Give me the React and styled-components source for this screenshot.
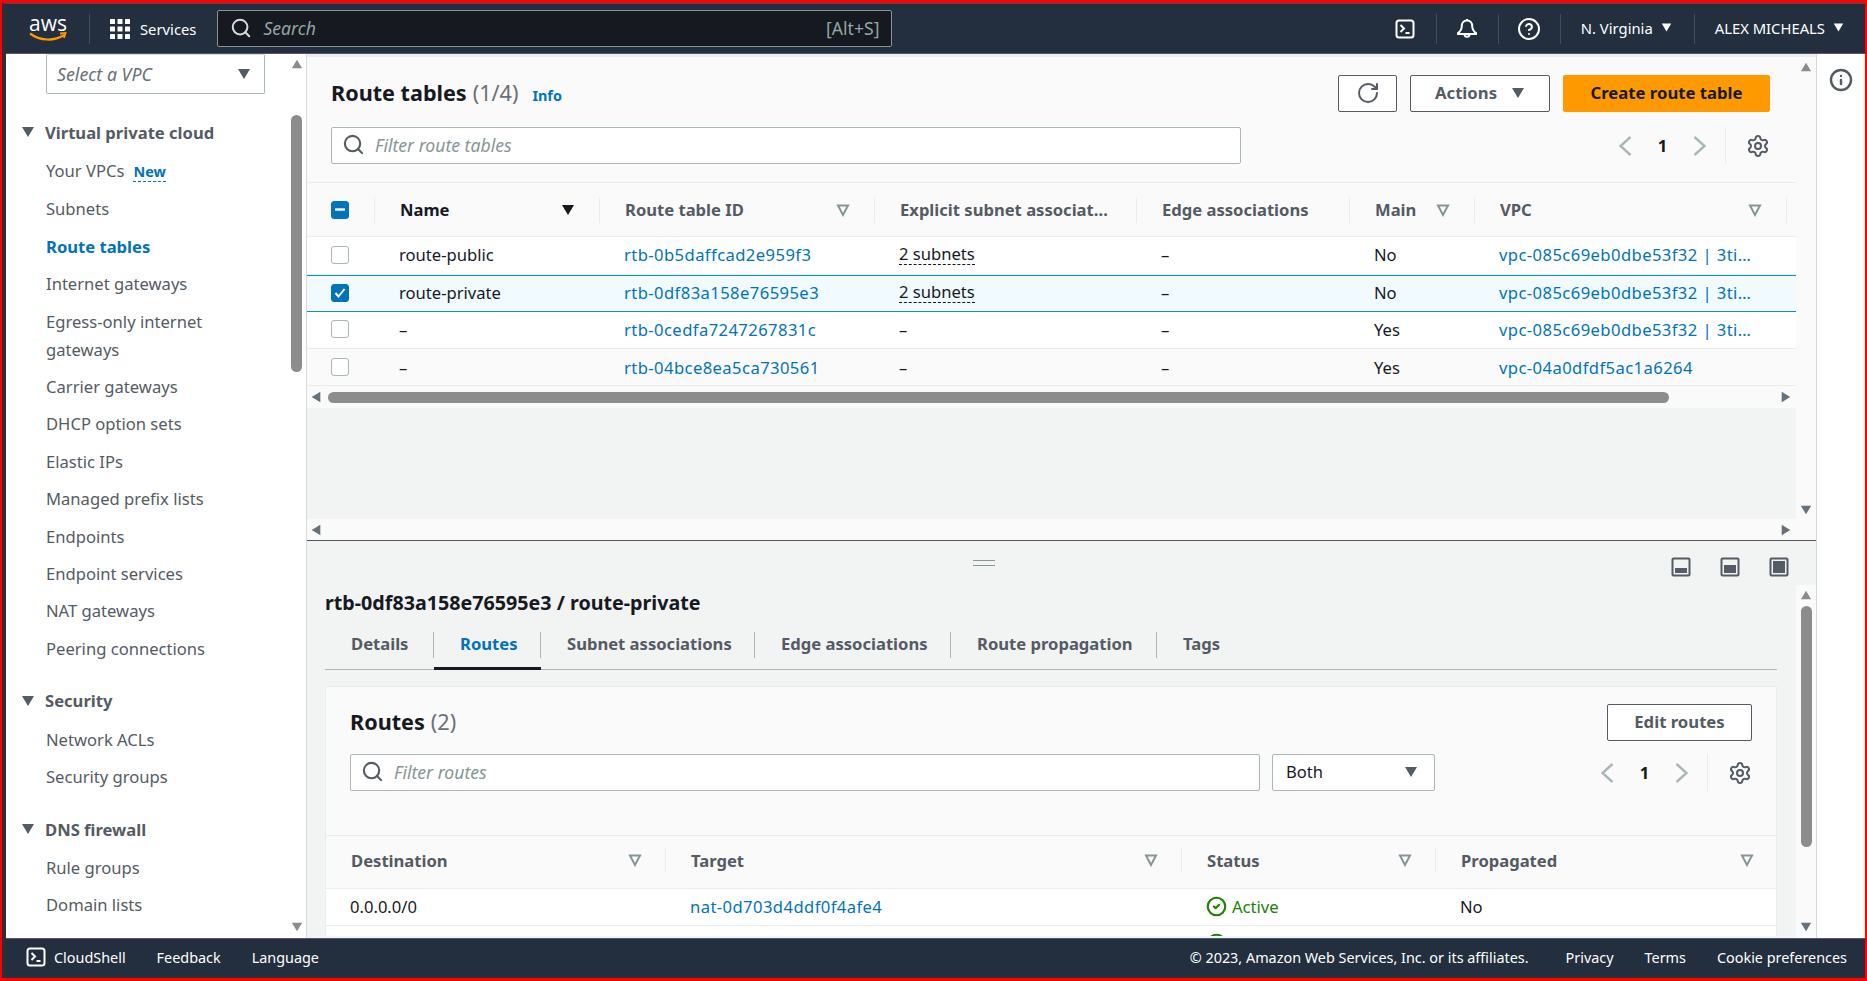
import React from "react";
import styled, { createGlobalStyle } from "styled-components";
import { CircleCheck, CircleHelp, Info, RotateCw, Search, Settings } from "lucide-react";

const GlobalStyle = createGlobalStyle`
  html, body { margin: 0; padding: 0; background: #ff0000; }
  body { font-family: "Noto Sans", "Open Sans", sans-serif; font-size: 16.6px; color: #16191f; overflow: hidden; }
  * { box-sizing: border-box; }
`;

const Frame = styled.div`
  width: 1867px;
  height: 981px;
  background: #ff0000;
  padding: 3px 2px;
`;

const Window = styled.div`
  height: 100%;
  display: flex;
  flex-direction: column;
  border-left: 4px solid #2b3038;
  border-top: 1px solid #414d5c;
  border-bottom: 3px solid #2b3038;
`;

const TopNav = styled.header`
  height: 50px;
  flex: none;
  background: #232f3e;
  border-bottom: 1px solid #545b64;
  display: flex;
  align-items: center;
  color: #fff;
  padding-left: 22px;
  font-size: 14.8px;
`;

const Logo = styled.div`
  width: 40px;
  height: 32px;
  display: flex;
  flex-direction: column;
  align-items: center;
  margin-right: 21px;
  line-height: 20px;
  font-size: 21px;
  font-family: "Open Sans", sans-serif;
  svg { margin-top: -1px; }
`;

const NavDivider = styled.span`
  width: 1px;
  height: 30px;
  background: #414d5c;
  flex: none;
`;

const Services = styled.div`
  display: flex;
  align-items: center;
  gap: 10px;
  margin: 0 21px 0 20px;
`;

const SearchBox = styled.div`
  width: 675px;
  height: 37px;
  background: #16191f;
  border: 1px solid #879596;
  border-radius: 2px;
  display: flex;
  align-items: center;
  padding: 0 12px 2px;
  color: #95a5a6;
  font-size: 17.6px;
  svg { color: #d5dbdb; margin-right: 11px; }
  em { flex: 1; }
`;

const NavRight = styled.div`
  margin-left: auto;
  display: flex;
  align-items: center;
  height: 30px;
`;

const NavIcon = styled.div`
  width: 62px;
  height: 30px;
  display: flex;
  align-items: center;
  justify-content: center;
  border-right: 1px solid #414d5c;
`;

const NavMenu = styled.div`
  height: 30px;
  display: flex;
  align-items: center;
  gap: 8px;
  padding: 0 ${(p) => p.$pr}px 2px 20px;
  border-right: ${(p) => (p.$last ? "none" : "1px solid #414d5c")};
`;

const Body = styled.div`
  flex: 1;
  display: flex;
  min-height: 0;
`;

const Sidebar = styled.nav`
  width: 301px;
  flex: none;
  background: #fff;
  display: flex;
  border-right: 1px solid #d5dbdb;
`;

const SideContent = styled.div`
  flex: 1;
  overflow: hidden;
  padding-left: 40px;
  color: #545b64;
`;

const VpcSelect = styled.div`
  width: 219px;
  height: 40px;
  border: 1px solid #aab7b8;
  border-top-color: #d5dbdb;
  border-radius: 2px;
  display: flex;
  align-items: center;
  justify-content: space-between;
  padding: 0 13px 0 10px;
  font-style: italic;
  font-size: 17.8px;
  color: #687078;
  margin-bottom: 24px;
`;

const SideHeading = styled.div`
  display: flex;
  align-items: center;
  height: 28px;
  font-weight: 700;
  margin: ${(p) => (p.$first ? 0 : 24)}px 0 11px -25px;
  gap: 10px;
`;

const SideItem = styled.div`
  line-height: 28px;
  margin-bottom: 9.4px;
  width: 200px;
  font-weight: ${(p) => (p.$active ? 700 : 400)};
  color: ${(p) => (p.$active ? "#0073bb" : "#545b64")};
`;

const NewBadge = styled.span`
  color: #0073bb;
  font-weight: 700;
  font-size: 14.4px;
  margin-left: 9px;
  border-bottom: 1px dashed #0073bb;
`;

const VTrack = styled.div`
  width: ${(p) => p.$w}px;
  flex: none;
  display: flex;
  flex-direction: column;
  align-items: center;
  background: ${(p) => p.$bg};
  padding: 4px 0 ${(p) => p.$pb ?? 5}px;
`;

const VThumb = styled.div`
  width: 11px;
  height: ${(p) => p.$h}px;
  margin-top: ${(p) => p.$top}px;
  background: #8c8c8c;
  border-radius: 6px;
`;

const TrackEnd = styled.div`
  margin-top: auto;
  display: flex;
`;

const Main = styled.main`
  width: 1509px;
  flex: none;
  display: flex;
  flex-direction: column;
  background: #f2f3f3;
`;

const Upper = styled.section`
  height: 487px;
  flex: none;
  display: flex;
  border-top: 3px solid #eaeded;
  border-bottom: 1px solid #545b64;
`;

const UpperBody = styled.div`
  flex: 1;
  min-width: 0;
  display: flex;
  flex-direction: column;
`;

const PanelHead = styled.div`
  background: #fafafa;
  height: 126px;
  flex: none;
  padding: 18px 26px 0 24px;
  border-bottom: 1px solid #eaeded;
`;

const HeadRow = styled.div`
  display: flex;
  align-items: center;
  justify-content: space-between;
`;

const Title = styled.h1`
  margin: -2px 0 0;
  font-size: 21.6px;
  font-weight: 700;
  display: flex;
  align-items: baseline;
  gap: 6px;
  span { font-weight: 400; color: #687078; }
`;

const InfoLink = styled.a`
  color: #0073bb;
  font-size: 14.4px;
  font-weight: 700;
  margin-left: 8px;
`;

const Actions = styled.div`
  display: flex;
  gap: 13px;
`;

const Button = styled.button`
  height: 37px;
  width: ${(p) => p.$w}px;
  font: inherit;
  font-weight: 700;
  font-size: 16.7px;
  border-radius: 2px;
  border: 1px solid ${(p) => (p.$primary ? "#ff9900" : "#545b64")};
  background: ${(p) => (p.$primary ? "#ff9900" : "#fff")};
  color: ${(p) => (p.$primary ? "#16191f" : "#545b64")};
  display: flex;
  align-items: center;
  justify-content: center;
  gap: 14px;
  padding: 0 0 2px;
`;

const FilterRow = styled.div`
  display: flex;
  align-items: center;
  margin-top: ${(p) => p.$top}px;
`;

const Filter = styled.div`
  height: 37px;
  width: ${(p) => p.$w}px;
  flex: none;
  background: #fff;
  border: 1px solid #aab7b8;
  border-radius: 2px;
  display: flex;
  align-items: center;
  gap: 10px;
  padding: 0 0 2px 10px;
  font-style: italic;
  font-size: 17.6px;
  color: #879596;
  svg { color: #545b64; }
`;

const BothSelect = styled.div`
  height: 37px;
  width: 163px;
  margin-left: 12px;
  flex: none;
  background: #fff;
  border: 1px solid #aab7b8;
  border-radius: 2px;
  display: flex;
  align-items: center;
  justify-content: space-between;
  padding: 0 16px 2px 13px;
`;

const Pager = styled.div`
  margin-left: auto;
  display: flex;
  align-items: center;
  height: 37px;
`;

const PageNum = styled.b`
  width: 61px;
  text-align: center;
  color: #16191f;
  font-size: 16.6px;
`;

const GearCell = styled.div`
  margin-left: 19px;
  height: 37px;
  padding-left: 20px;
  border-left: 1px solid #eaeded;
  color: #545b64;
  display: flex;
  align-items: center;
`;

const HeaderRow = styled.div`
  display: grid;
  grid-template-columns: ${(p) => p.$cols};
  height: ${(p) => p.$h}px;
  padding-bottom: ${(p) => p.$pb ?? 0}px;
  flex: none;
  align-items: center;
  background: #fafafa;
  border-bottom: 1px solid #eaeded;
`;

const HeadCell = styled.div`
  height: 26px;
  display: flex;
  align-items: center;
  justify-content: space-between;
  padding: 0 ${(p) => p.$pr ?? 24}px 0 ${(p) => p.$pl ?? 25}px;
  border-right: ${(p) => (p.$end ? "none" : "1px solid #eaeded")};
  font-weight: 700;
  color: ${(p) => (p.$sorted ? "#16191f" : "#545b64")};
  white-space: nowrap;
`;

const DataRow = styled.div`
  display: grid;
  grid-template-columns: ${(p) => p.$cols};
  height: ${(p) => p.$h || 37}px;
  padding-bottom: ${(p) => (p.$soft ? 0 : 2)}px;
  flex: none;
  align-items: center;
  background: ${(p) => (p.$selected ? "#f1faff" : p.$soft ? "#fafafa" : "#fff")};
  border-bottom: 1px solid ${(p) => (p.$selected ? "#0f8fc4" : "#eaeded")};
  border-top: ${(p) => (p.$selected ? "1px solid #0f8fc4" : "none")};
`;

const Cell = styled.div`
  padding-left: 24px;
  white-space: nowrap;
  display: flex;
  align-items: center;
`;

const Link = styled.a`
  color: #0073bb;
  letter-spacing: 0.42px;
`;

const Dotted = styled.span`
  border-bottom: 1px dashed #16191f;
  line-height: 20px;
`;

const Active = styled.span`
  color: #1d8102;
  display: flex;
  align-items: center;
  gap: 5px;
`;

const Box = styled.span`
  width: 18px;
  height: 18px;
  display: block;
  border-radius: 3px;
  border: 1px solid ${(p) => (p.$on ? "#0073bb" : "#aab7b8")};
  background: ${(p) => (p.$on ? "#0073bb" : "#fff")};
  svg { display: block; }
`;

const HScroll = styled.div`
  height: ${(p) => p.$h}px;
  flex: none;
  background: #fafafa;
  display: flex;
  align-items: center;
  justify-content: space-between;
  padding: 0 4px 0 3px;
`;

const HThumb = styled.div`
  width: 1341px;
  height: 11px;
  background: #8c8c8c;
  border-radius: 6px;
  margin: 0 auto 0 6px;
`;

const EmptyArea = styled.div`
  flex: 1;
  background: #f2f3f3;
`;

const Lower = styled.section`
  flex: 1;
  min-height: 0;
  display: flex;
  flex-direction: column;
`;

const HandleRow = styled.div`
  height: 44px;
  flex: none;
  display: flex;
  align-items: center;
  padding-right: 27px;
`;

const Handle = styled.div`
  width: 22px;
  height: 6px;
  margin-left: 666px;
  border-top: 1px solid #879596;
  border-bottom: 1px solid #879596;
`;

const SplitIcons = styled.div`
  margin-left: auto;
  padding-top: 8px;
  display: flex;
  gap: 29px;
  color: #545b64;
  svg { display: block; }
`;

const LowerBody = styled.div`
  flex: 1;
  min-height: 0;
  display: flex;
`;

const LowerContent = styled.div`
  flex: 1;
  min-width: 0;
  padding: 0 19px 2px 18px;
  display: flex;
  flex-direction: column;
`;

const DetailTitle = styled.h2`
  margin: 5px 0 0;
  font-size: 19.7px;
  line-height: 26px;
  font-weight: 700;
`;

const Tabs = styled.div`
  display: flex;
  margin-top: 16px;
  height: 38px;
  flex: none;
  border-bottom: 1px solid #aab7b8;
`;

const Tab = styled.div`
  width: ${(p) => p.$w}px;
  flex: none;
  height: 37px;
  padding: 0 0 15px 26px;
  display: flex;
  align-items: center;
  white-space: nowrap;
  font-weight: 700;
  color: ${(p) => (p.$active ? "#0073bb" : "#545b64")};
  position: relative;
  &::after {
    content: "";
    position: absolute;
    right: 0;
    top: 0;
    height: 26px;
    border-right: ${(p) => (p.$end ? "none" : "1px solid #aab7b8")};
  }
  &::before {
    content: "";
    position: absolute;
    left: 0;
    right: 0;
    bottom: -1px;
    height: 3px;
    background: ${(p) => (p.$active ? "#16191f" : "transparent")};
  }
`;

const RoutesPanel = styled.div`
  margin-top: 16px;
  flex: 1;
  min-height: 0;
  overflow: hidden;
  background: #fafafa;
  border-left: 1px solid #eaeded;
  border-right: 1px solid #eaeded;
  border-top: 1px solid #eaeded;
  display: flex;
  flex-direction: column;
`;

const RoutesHead = styled.div`
  height: 149px;
  flex: none;
  padding: 17px 24px 0 24px;
  border-bottom: 1px solid #eaeded;
`;

const RoutesTitleRow = styled.div`
  display: flex;
  align-items: center;
  justify-content: space-between;
`;

const Tools = styled.aside`
  flex: 1;
  background: #fff;
  border-left: 1px solid #d5dbdb;
  display: flex;
  justify-content: center;
  padding-top: 14px;
  color: #545b64;
  svg { height: 24px; }
`;

const Footer = styled.footer`
  height: 37px;
  flex: none;
  background: #232f3e;
  border-top: 1px solid #545b64;
  color: #fff;
  display: flex;
  align-items: center;
  font-size: 14.4px;
  padding-left: 20px;
  padding-right: 18px;
`;

const FootLink = styled.span`
  display: flex;
  align-items: center;
  gap: 8px;
  margin-right: 31px;
`;

const FootRight = styled.div`
  margin-left: auto;
  display: flex;
  align-items: center;
  gap: 31px;
  span:first-child { margin-right: 6px; }
`;

const Caret = ({ color = "#545b64", size = 14, up, left, right }) => {
  const points = up ? "7,2 13,12 1,12" : left ? "12,1 12,13 2,7" : right ? "2,1 2,13 12,7" : "1,2 13,2 7,12";
  return (
    <svg width={size} height={size} viewBox="0 0 14 14" style={{ flex: "none" }}>
      <polygon points={points} fill={color} />
    </svg>
  );
};

const FilterCaret = () => (
  <svg width="14" height="14" viewBox="0 0 14 14" style={{ flex: "none" }}>
    <polygon points="2,2.5 12,2.5 7,12" fill="none" stroke="#879596" strokeWidth="2" />
  </svg>
);

const ShellIcon = () => (
  <svg width="20" height="20" viewBox="0 0 20 20" fill="none" stroke="#fff" strokeWidth="2">
    <rect x="1.5" y="1.5" width="17" height="17" rx="2.5" />
    <path d="M5.5 6l3.5 3.5-3.5 3.5M10.5 14h4" />
  </svg>
);

const BellIcon = () => (
  <svg width="22" height="22" viewBox="0 0 22 22" fill="none" stroke="#fff" strokeWidth="2">
    <path d="M11 2.5c-3.4 0-5.2 2.6-5.2 5.6 0 3.6-1.3 5.2-3.8 7v1h18v-1c-2.5-1.8-3.8-3.4-3.8-7 0-3-1.8-5.6-5.2-5.6z" />
    <path d="M8.5 16.2a2.5 2.5 0 0 0 5 0" />
    <path d="M11 1v2" />
  </svg>
);

const Chevron = ({ right }) => (
  <svg width="13" height="20" viewBox="0 0 13 20" fill="none" stroke="#aab7b8" strokeWidth="2.4" style={{ flex: "none" }}>
    <path d={right ? "M1.5 1l10 9-10 9" : "M11.5 1l-10 9 10 9"} />
  </svg>
);

const SplitIcon = ({ y, h }) => (
  <svg width="20" height="20" viewBox="0 0 20 20">
    <rect x="1.5" y="1.5" width="17" height="17" rx="1" fill="none" stroke="currentColor" strokeWidth="2" />
    <rect x="4" y={y} width="12" height={h} fill="currentColor" />
  </svg>
);

const tableCols = "68px 225px 275px 262px 213px 125px 312px 9px";
const routeCols = "340px 516px 254px 338px";

const tableRows = [
  { name: "route-public", id: "rtb-0b5daffcad2e959f3", sub: "2 subnets", main: "No", vpc: "vpc-085c69eb0dbe53f32 | 3ti…", h: 38 },
  { name: "route-private", id: "rtb-0df83a158e76595e3", sub: "2 subnets", main: "No", vpc: "vpc-085c69eb0dbe53f32 | 3ti…", selected: true },
  { name: "–", id: "rtb-0cedfa7247267831c", sub: "–", main: "Yes", vpc: "vpc-085c69eb0dbe53f32 | 3ti…" },
  { name: "–", id: "rtb-04bce8ea5ca730561", sub: "–", main: "Yes", vpc: "vpc-04a0dfdf5ac1a6264", soft: true },
];

const sideGroups = [
  {
    title: "Virtual private cloud",
    items: ["Your VPCs", "Subnets", "Route tables", "Internet gateways", "Egress-only internet gateways", "Carrier gateways", "DHCP option sets", "Elastic IPs", "Managed prefix lists", "Endpoints", "Endpoint services", "NAT gateways", "Peering connections"],
  },
  { title: "Security", items: ["Network ACLs", "Security groups"] },
  { title: "DNS firewall", items: ["Rule groups", "Domain lists"] },
];

const tabs = [
  ["Details", 109],
  ["Routes", 107, true],
  ["Subnet associations", 214],
  ["Edge associations", 196],
  ["Route propagation", 206],
  ["Tags", 120],
];

function PagerBlock() {
  return (
    <Pager>
      <Chevron />
      <PageNum>1</PageNum>
      <Chevron right />
      <GearCell><Settings size={24} /></GearCell>
    </Pager>
  );
}

function App() {
  return (
    <Frame>
      <GlobalStyle />
      <Window>
        <TopNav>
          <Logo>
            aws
            <svg width="38" height="10" viewBox="0 0 38 10" fill="none">
              <path d="M1 1.5c10 7.5 24 8 34 1.5" stroke="#ff9900" strokeWidth="2.2" />
              <path d="M31 1.5l5.5-.5-1.5 5" stroke="#ff9900" strokeWidth="1.8" />
            </svg>
          </Logo>
          <NavDivider />
          <Services>
            <svg width="20" height="20" viewBox="0 0 20 20" fill="#fff">
              {[0, 7.5, 15].map((y) => [0, 7.5, 15].map((x) => <rect key={`${x}-${y}`} x={x} y={y} width="5" height="5" rx="0.5" />))}
            </svg>
            <span>Services</span>
          </Services>
          <SearchBox>
            <Search size={22} strokeWidth={2.2} />
            <em>Search</em>
            <span>[Alt+S]</span>
          </SearchBox>
          <NavRight>
            <NavIcon><ShellIcon /></NavIcon>
            <NavIcon><BellIcon /></NavIcon>
            <NavIcon><CircleHelp size={24} strokeWidth={2} /></NavIcon>
            <NavMenu $pr={22}>N. Virginia <Caret color="#fff" size={11} /></NavMenu>
            <NavMenu $pr={21} $last>ALEX MICHEALS <Caret color="#fff" size={11} /></NavMenu>
          </NavRight>
        </TopNav>

        <Body>
          <Sidebar>
            <SideContent>
              <VpcSelect>Select a VPC <Caret /></VpcSelect>
              {sideGroups.map((group, i) => (
                <div key={group.title}>
                  <SideHeading $first={i === 0}>
                    <Caret />
                    {group.title}
                  </SideHeading>
                  {group.items.map((item) => (
                    <SideItem key={item} $active={item === "Route tables"}>
                      {item}
                      {item === "Your VPCs" && <NewBadge>New</NewBadge>}
                    </SideItem>
                  ))}
                </div>
              ))}
            </SideContent>
            <VTrack $w={19} $bg="#fff">
              <Caret up color="#8c8c8c" size={12} />
              <VThumb $top={45} $h={257} />
              <TrackEnd><Caret color="#8c8c8c" size={12} /></TrackEnd>
            </VTrack>
          </Sidebar>

          <Main>
            <Upper>
              <UpperBody>
                <PanelHead>
                  <HeadRow>
                    <Title>Route tables <span>(1/4)</span><InfoLink>Info</InfoLink></Title>
                    <Actions>
                      <Button $w={59}><RotateCw size={24} /></Button>
                      <Button $w={140}>Actions <Caret /></Button>
                      <Button $w={207} $primary>Create route table</Button>
                    </Actions>
                  </HeadRow>
                  <FilterRow $top={15}>
                    <Filter $w={910}><Search size={23} strokeWidth={2.2} />Filter route tables</Filter>
                    <PagerBlock />
                  </FilterRow>
                </PanelHead>
                <HeaderRow $cols={tableCols} $h={54}>
                  <HeadCell $pl={24} $pr={0}>
                    <Box $on>
                      <svg width="16" height="16" viewBox="0 0 16 16"><path d="M3 7.5h10" stroke="#fff" strokeWidth="2.4" /></svg>
                    </Box>
                  </HeadCell>
                  <HeadCell $sorted>Name <Caret color="#16191f" /></HeadCell>
                  <HeadCell>Route table ID <FilterCaret /></HeadCell>
                  <HeadCell $pr={0}>Explicit subnet associat…</HeadCell>
                  <HeadCell>Edge associations</HeadCell>
                  <HeadCell>Main <FilterCaret /></HeadCell>
                  <HeadCell>VPC <FilterCaret /></HeadCell>
                </HeaderRow>
                {tableRows.map((row) => (
                  <DataRow key={row.id} $cols={tableCols} $h={row.h} $selected={row.selected} $soft={row.soft}>
                    <Cell>
                      <Box $on={row.selected}>
                        {row.selected && (
                          <svg width="16" height="16" viewBox="0 0 16 16" fill="none"><path d="M3.5 8l3 3.5 6-7.5" stroke="#fff" strokeWidth="2" /></svg>
                        )}
                      </Box>
                    </Cell>
                    <Cell>{row.name}</Cell>
                    <Cell><Link>{row.id}</Link></Cell>
                    <Cell>{row.sub === "–" ? "–" : <Dotted>{row.sub}</Dotted>}</Cell>
                    <Cell>–</Cell>
                    <Cell>{row.main}</Cell>
                    <Cell><Link>{row.vpc}</Link></Cell>
                  </DataRow>
                ))}
                <HScroll $h={22}>
                  <Caret left color="#687078" size={12} />
                  <HThumb />
                  <Caret right color="#687078" size={12} />
                </HScroll>
                <EmptyArea />
                <HScroll $h={21}>
                  <Caret left color="#687078" size={12} />
                  <Caret right color="#687078" size={12} />
                </HScroll>
              </UpperBody>
              <VTrack $w={20} $bg="#fafafa" $pb={24}>
                <Caret up color="#8c8c8c" size={12} />
                <TrackEnd><Caret color="#687078" size={12} /></TrackEnd>
              </VTrack>
            </Upper>

            <Lower>
              <HandleRow>
                <Handle />
                <SplitIcons>
                  <SplitIcon y={11} h={5} />
                  <SplitIcon y={8} h={8} />
                  <SplitIcon y={4} h={12} />
                </SplitIcons>
              </HandleRow>
              <LowerBody>
                <LowerContent>
                  <DetailTitle>rtb-0df83a158e76595e3 / route-private</DetailTitle>
                  <Tabs>
                    {tabs.map(([label, width, active], i) => (
                      <Tab key={label} $w={width} $active={active} $end={i === tabs.length - 1}>{label}</Tab>
                    ))}
                  </Tabs>
                  <RoutesPanel>
                    <RoutesHead>
                      <RoutesTitleRow>
                        <Title>Routes <span>(2)</span></Title>
                        <Button $w={145}>Edit routes</Button>
                      </RoutesTitleRow>
                      <FilterRow $top={13}>
                        <Filter $w={910}><Search size={23} strokeWidth={2.2} /><span>Filter routes</span></Filter>
                        <BothSelect>Both <Caret /></BothSelect>
                        <PagerBlock />
                      </FilterRow>
                    </RoutesHead>
                    <HeaderRow $cols={routeCols} $h={53} $pb={4}>
                      <HeadCell $pr={23}>Destination <FilterCaret /></HeadCell>
                      <HeadCell $pr={23}>Target <FilterCaret /></HeadCell>
                      <HeadCell $pr={23}>Status <FilterCaret /></HeadCell>
                      <HeadCell $pr={20} $end>Propagated <FilterCaret /></HeadCell>
                    </HeaderRow>
                    <DataRow $cols={routeCols}>
                      <Cell>0.0.0.0/0</Cell>
                      <Cell><Link>nat-0d703d4ddf0f4afe4</Link></Cell>
                      <Cell><Active><CircleCheck size={21} strokeWidth={2.4} />Active</Active></Cell>
                      <Cell>No</Cell>
                    </DataRow>
                    <DataRow $cols={routeCols}>
                      <Cell />
                      <Cell />
                      <Cell><Active><CircleCheck size={21} strokeWidth={2.4} /></Active></Cell>
                      <Cell />
                    </DataRow>
                  </RoutesPanel>
                </LowerContent>
                <VTrack $w={20} $bg="#fafafa">
                  <Caret up color="#8c8c8c" size={12} />
                  <VThumb $top={5} $h={241} />
                  <TrackEnd><Caret color="#687078" size={12} /></TrackEnd>
                </VTrack>
              </LowerBody>
            </Lower>
          </Main>

          <Tools><Info size={24} strokeWidth={2.4} /></Tools>
        </Body>

        <Footer>
          <FootLink><ShellIcon />CloudShell</FootLink>
          <FootLink>Feedback</FootLink>
          <FootLink>Language</FootLink>
          <FootRight>
            <span>© 2023, Amazon Web Services, Inc. or its affiliates.</span>
            <span>Privacy</span>
            <span>Terms</span>
            <span>Cookie preferences</span>
          </FootRight>
        </Footer>
      </Window>
    </Frame>
  );
}

export default App;
